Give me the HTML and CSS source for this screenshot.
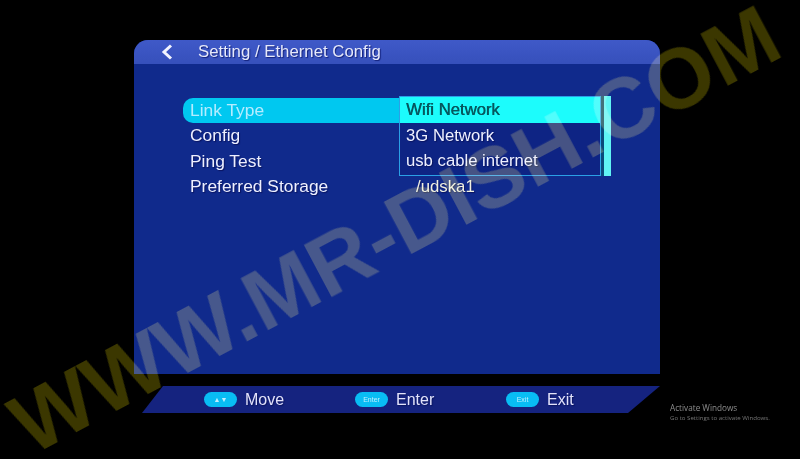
FILE: index.html
```html
<!DOCTYPE html>
<html lang="en">
<head>
<meta charset="utf-8">
<title>Ethernet Config</title>
<link rel="stylesheet" href="styles.css">
</head>
<body>
<main class="screen">
  <section class="panel">
    <header class="panel-head">
      <svg class="back" width="12" height="16" viewBox="0 0 12 16"><path d="M10 1.5 3 8l7 6.5" fill="none" stroke="#f2f4ff" stroke-width="3"/></svg>
      <h1 class="title">Setting / Ethernet Config</h1>
    </header>
    <div class="panel-body">
      <ul class="menu">
        <li class="row row-active"><span class="label">Link Type</span></li>
        <li class="row"><span class="label">Config</span></li>
        <li class="row"><span class="label">Ping Test</span></li>
        <li class="row"><span class="label">Preferred Storage</span><span class="value">/udska1</span></li>
      </ul>
      <div class="dropdown">
        <ul class="options">
          <li class="option option-active">Wifi Network</li>
          <li class="option">3G Network</li>
          <li class="option">usb cable internet</li>
        </ul>
        <div class="scrollbar"></div>
      </div>
    </div>
  </section>
  <footer class="keys">
    <div class="key"><span class="pill">▲▼</span><span class="key-text">Move</span></div>
    <div class="key"><span class="pill">Enter</span><span class="key-text">Enter</span></div>
    <div class="key"><span class="pill">Exit</span><span class="key-text">Exit</span></div>
  </footer>
</main>
<div class="watermark">WWW.MR-DISH.COM</div>
<aside class="activate">
  <div class="activate-title">Activate Windows</div>
  <div class="activate-sub">Go to Settings to activate Windows.</div>
</aside>
</body>
</html>
```
FILE: styles.css
```css
* { box-sizing: border-box; }
html, body { margin: 0; padding: 0; }
body {
  width: 800px;
  height: 459px;
  overflow: hidden;
  background: #000;
  position: relative;
  font-family: "Liberation Sans", Arial, sans-serif;
  color: #eef0ff;
}
ul { list-style: none; margin: 0; padding: 0; }
.screen { padding: 40px 0 0 134px; }
.panel {
  width: 526px;
  height: 334px;
  background: #102a8c;
  border-radius: 14px 14px 0 0;
  display: flex;
  flex-direction: column;
  filter: blur(0.5px);
}
.panel-head {
  height: 24px;
  background: linear-gradient(#3f59c8, #3650bb);
  border-radius: 14px 14px 0 0;
  display: flex;
  align-items: center;
  padding-left: 27px;
  gap: 25px;
}
.title {
  margin: 0;
  font-size: 16.8px;
  font-weight: normal;
  color: #e6e9fa;
  text-shadow: 1px 1px 1px #12207a;
}
.panel-body { position: relative; flex: 1; padding: 34px 0 0 49px; }
.menu { width: 400px; }
.row {
  height: 25.3px;
  display: flex;
  align-items: center;
  padding-left: 7px;
  font-size: 17.4px;
  text-shadow: 1px 1px 1px #0a1460;
}
.row-active {
  width: 225px;
  background: #00c8f0;
  border-radius: 10px 0 0 10px;
  color: #b4ecff;
  text-shadow: none;
}
.label { width: 226px; }
.value { font-size: 16.8px; color: #f0f0e0; }
.dropdown {
  position: absolute;
  left: 265px;
  top: 32px;
  height: 80px;
  display: flex;
}
.options {
  width: 202px;
  border: 1px solid #2ba0e6;
  background: #0e2484;
}
.option {
  height: 25.3px;
  display: flex;
  align-items: center;
  padding-left: 6px;
  font-size: 16.7px;
  color: #eef0ff;
  text-shadow: 1px 1px 1px #0a1460;
}
.option-active {
  height: 26px;
  background: #1cfcfc;
  color: #06585f;
  text-shadow: 0.5px 0 0 #06585f;
}
.scrollbar {
  width: 10px;
  background: #60f4f4;
  border-left: 3px solid #0a4a7a;
}
.keys {
  width: 518px;
  height: 27px;
  margin: 12px 0 0 8px;
  background: #15237f;
  clip-path: polygon(21px 0, 100% 0, 486px 100%, 0 100%);
  display: flex;
  align-items: center;
  padding-left: 62px;
  filter: blur(0.4px);
}
.key { width: 151px; display: flex; align-items: center; gap: 8px; }
.pill {
  width: 33px;
  height: 15px;
  border-radius: 8px;
  background: #08bdf4;
  color: #bfeeff;
  font-size: 7px;
  display: flex;
  align-items: center;
  justify-content: center;
}
.key-text {
  font-size: 16px;
  color: #e2e2fa;
  text-shadow: 1px 1px 1px #0a1460;
}
.watermark {
  position: absolute;
  left: -33px;
  top: 198px;
  font-size: 86px;
  line-height: 62px;
  font-weight: bold;
  white-space: nowrap;
  color: #3b3700;
  mix-blend-mode: screen;
  transform: rotate(-28deg);
  filter: blur(0.5px);
}
.activate { position: absolute; left: 670px; top: 403px; color: #8d8d8d; }
.activate-title { font-size: 8.2px; line-height: 10px; font-family: "Open Sans", sans-serif; }
.activate-sub { font-size: 6.1px; line-height: 9px; font-family: "Open Sans", sans-serif; color: #777; }
```
